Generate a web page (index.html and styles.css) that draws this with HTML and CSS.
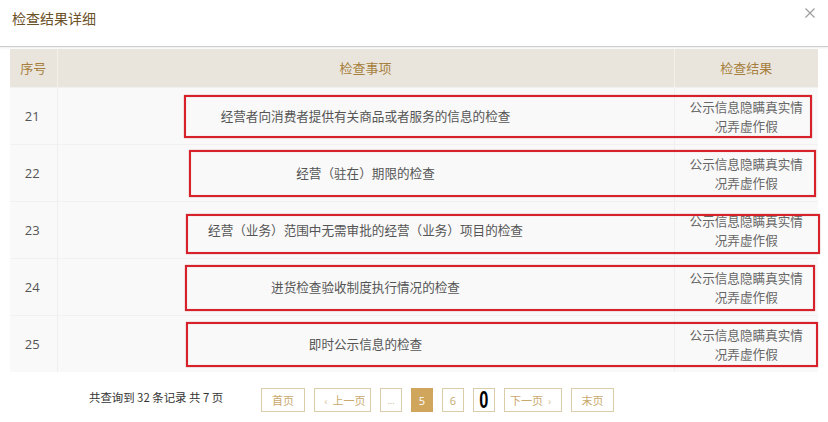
FILE: index.html
```html
<!DOCTYPE html>
<html lang="zh-CN">
<head>
<meta charset="utf-8">
<title>检查结果详细</title>
<link rel="stylesheet" href="styles.css">
</head>
<body>
<div class="dialog">
  <div class="dlg-head">
    <div class="dlg-title">检查结果详细</div>
    <svg class="dlg-close" width="10" height="10" viewBox="0 0 10 10"><path d="M0.5 0.5 L9.5 9.5 M9.5 0.5 L0.5 9.5" stroke="#9a9a9a" stroke-width="1.1" fill="none"/></svg>
  </div>

  <div class="table-area">
    <table class="result-table">
      <colgroup>
        <col class="c-no">
        <col class="c-item">
        <col class="c-res">
      </colgroup>
      <thead>
        <tr><th>序号</th><th>检查事项</th><th>检查结果</th></tr>
      </thead>
      <tbody>
        <tr><td class="no">21</td><td class="item">经营者向消费者提供有关商品或者服务的信息的检查</td><td class="res">公示信息隐瞒真实情况弄虚作假</td></tr>
        <tr><td class="no">22</td><td class="item">经营（驻在）期限的检查</td><td class="res">公示信息隐瞒真实情况弄虚作假</td></tr>
        <tr><td class="no">23</td><td class="item">经营（业务）范围中无需审批的经营（业务）项目的检查</td><td class="res">公示信息隐瞒真实情况弄虚作假</td></tr>
        <tr><td class="no">24</td><td class="item">进货检查验收制度执行情况的检查</td><td class="res">公示信息隐瞒真实情况弄虚作假</td></tr>
        <tr><td class="no">25</td><td class="item">即时公示信息的检查</td><td class="res">公示信息隐瞒真实情况弄虚作假</td></tr>
      </tbody>
    </table>
    <div class="mark m1"></div>
    <div class="mark m2"></div>
    <div class="mark m3"></div>
    <div class="mark m4"></div>
    <div class="mark m5"></div>
  </div>

  <div class="pager">
    <div class="pager-info">共查询到 32 条记录 共 7 页</div>
    <div class="pager-btns">
      <span class="pg pg-first">首页</span>
      <span class="pg pg-prev"><span class="arr">‹</span>上一页</span>
      <span class="pg pg-num pg-dots">...</span>
      <span class="pg pg-num pg-cur">5</span>
      <span class="pg pg-num">6</span>
      <span class="pg pg-num pg-input"><span class="zero">0</span></span>
      <span class="pg pg-next">下一页<span class="arr">›</span></span>
      <span class="pg pg-last">末页</span>
    </div>
  </div>
</div>
</body>
</html>
```

FILE: styles.css
```css
* { box-sizing: border-box; }

html, body {
  margin: 0;
  padding: 0;
  background: #ffffff;
}

body {
  width: 828px;
  height: 422px;
  overflow: hidden;
  font-family: "Noto Sans CJK SC", "Noto Sans", sans-serif;
  color: #555;
}

.dlg-head {
  height: 47px;
  display: flex;
  justify-content: space-between;
  align-items: flex-start;
  padding: 8px 13px 0 12px;
  border-bottom: 1px solid #cdcdcd;
  box-shadow: 0 1px 2px rgba(0, 0, 0, 0.08);
}

.dlg-title {
  font-size: 14px;
  line-height: 20px;
  color: #6a5128;
}

.dlg-close {
  margin-top: 0;
  display: block;
}

.table-area {
  position: relative;
  margin: 2px 10px 0 10px;
  width: 808px;
}

.result-table {
  width: 808px;
  table-layout: fixed;
  border-collapse: collapse;
  font-size: 12.6px;
}

.c-no { width: 47px; }
.c-item { width: 617px; }
.c-res { width: 144px; }

.result-table th {
  height: 38px;
  background: #eae5dc;
  color: #a67f3e;
  font-weight: normal;
  font-size: 13px;
  text-align: center;
  border-left: 1px solid #f3f0ea;
  padding: 0;
}

.result-table th:first-child { border-left: none; }

.result-table td {
  height: 57px;
  background: #f9f9f9;
  border-top: 1px solid #f1f1f1;
  border-left: 1px solid #efefef;
  text-align: center;
  vertical-align: middle;
  padding: 0;
}

.result-table td:first-child { border-left: none; }

.result-table td.no {
  color: #555;
  font-size: 13px;
  font-family: "Open Sans", "Noto Sans", sans-serif;
  padding-right: 2px;
}

.result-table td.item {
  color: #555;
}

.result-table td.res {
  color: #666;
  line-height: 19px;
  padding: 0 12px;
}

.mark {
  position: absolute;
  border: 2px solid #d7222c;
  box-shadow: 0 0 1px rgba(170, 0, 0, 0.6), inset 0 0 1px rgba(170, 0, 0, 0.4);
}

.m1 { left: 174px; top: 46px; width: 628px; height: 43px; }
.m2 { left: 179px; top: 101px; width: 627px; height: 47px; }
.m3 { left: 176px; top: 165px; width: 634px; height: 40px; }
.m4 { left: 175px; top: 216px; width: 630px; height: 46px; }
.m5 { left: 176px; top: 273px; width: 632px; height: 45px; }

.pager {
  display: flex;
  align-items: center;
  margin-top: 16px;
  padding-left: 89px;
}

.pager-info {
  width: 172px;
  font-size: 11.4px;
  color: #333;
  padding-bottom: 6px;
}

.pager-btns {
  display: flex;
  gap: 9px;
}

.pg {
  height: 24px;
  border: 1px solid #dccdaa;
  color: #c8a96e;
  font-size: 11px;
  display: flex;
  align-items: center;
  justify-content: center;
  background: #fff;
}

.pg-first { width: 44px; }
.pg-prev { width: 57px; }
.pg-next { width: 58px; }
.pg-last { width: 43px; }
.pg-num { width: 22px; font-family: "Open Sans", sans-serif; }

.pg .arr {
  font-size: 10px;
  color: #d3bd8e;
  margin: 0 5px;
}

.pg-dots {
  color: #c8b58a;
  align-items: flex-end;
  padding-bottom: 4px;
  font-size: 9px;
}

.pg-cur {
  background: #d0a55c;
  border-color: #d0a55c;
  color: #fff;
}

.pg-input .zero {
  display: inline-block;
  font-family: "Liberation Sans", sans-serif;
  font-weight: bold;
  font-size: 21px;
  line-height: 20px;
  color: #000;
  transform: scale(0.78, 1.1);
}
```
